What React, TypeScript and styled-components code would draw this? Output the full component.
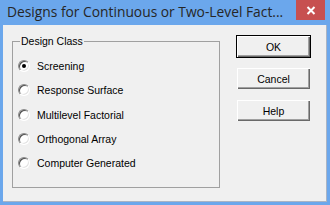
import styled, { createGlobalStyle } from "styled-components";

const GlobalStyle = createGlobalStyle`
  html, body {
    margin: 0;
    padding: 0;
    background: #6ba7ec;
  }
`;

const options = [
  "Screening",
  "Response Surface",
  "Multilevel Factorial",
  "Orthogonal Array",
  "Computer Generated",
];

const App = () => {
  return (
    <>
      <GlobalStyle />
      <Window>
        <TitleBar>
          <TitleText>Designs for Continuous or Two-Level Fact...</TitleText>
          <CloseButton>
            <svg width="10" height="9" viewBox="0 0 10 9">
              <path d="M1.5 1 L8.5 8 M8.5 1 L1.5 8" stroke="#fff" strokeWidth="2" />
            </svg>
          </CloseButton>
        </TitleBar>

        <Client>
          <GroupBox>
            <GroupLabel>Design Class</GroupLabel>
            {options.map((label, i) => (
              <RadioRow key={label}>
                <RadioCircle checked={i === 0} />
                <RadioText>{label}</RadioText>
              </RadioRow>
            ))}
          </GroupBox>

          <ButtonColumn>
            <DialogButton isDefault={true}>OK</DialogButton>
            <DialogButton>Cancel</DialogButton>
            <DialogButton>Help</DialogButton>
          </ButtonColumn>
        </Client>
      </Window>
    </>
  );
};
export default App;

const Window = styled.div`
  width: 330px;
  height: 205px;

  box-sizing: border-box;
  padding: 0 3px 3px 3px;
  background-color: #6ba7ec;

  display: flex;
  flex-direction: column;
`;

const TitleBar = styled.div`
  height: 25px;
  flex-shrink: 0;

  display: flex;
  flex-direction: row;
  align-items: flex-start;
  justify-content: space-between;
`;

const TitleText = styled.div`
  padding: 2px 0 0 4px;

  font-family: "Open Sans", "Noto Sans", sans-serif;
  font-size: 13.8px;
  line-height: 20px;
  color: #262626;
  white-space: nowrap;
`;

const CloseButton = styled.div`
  width: 29px;
  height: 20px;
  margin-right: 2px;

  background-color: #c75050;

  display: flex;
  align-items: center;
  justify-content: center;
`;

const Client = styled.div`
  flex: 1;

  box-sizing: border-box;
  padding: 10px 0 0 9px;
  background-color: #f0f0f0;
  border-right: 1px solid #aab4c4;
  border-bottom: 1px solid #aab4c4;

  display: flex;
  flex-direction: row;
  align-items: flex-start;
  gap: 16px;

  font-family: "Liberation Sans", Arial, sans-serif;
  font-size: 10.5px;
  color: #000;
`;

const GroupBox = styled.div`
  position: relative;
  width: 208px;
  height: 147px;
  margin-top: 6px;

  box-sizing: border-box;
  padding: 12px 0 0 5px;
  border: 1px solid #a0a0a0;

  display: flex;
  flex-direction: column;
`;

const GroupLabel = styled.div`
  position: absolute;
  top: -8px;
  left: 7px;

  padding: 0 1px;
  background-color: #f0f0f0;
  line-height: 14px;
`;

const RadioRow = styled.div`
  height: 24.25px;

  display: flex;
  flex-direction: row;
  align-items: center;
  gap: 7px;
`;

const RadioCircle = styled.div<{ checked?: boolean }>`
  position: relative;
  width: 12px;
  height: 12px;

  box-sizing: border-box;
  border-radius: 50%;
  border: 1px solid;
  border-color: #8a8a8a #ffffff #ffffff #8a8a8a;
  background-color: #ffffff;
  box-shadow: inset 1px 1px 0 #505050, inset -1px -1px 0 #e3e3e3;

  ${(props) =>
    props.checked &&
    `
    &::after {
      content: "";
      position: absolute;
      left: 3px;
      top: 3px;
      width: 4px;
      height: 4px;
      border-radius: 50%;
      background-color: #000;
    }
  `}
`;

const RadioText = styled.span`
  line-height: 14px;
  white-space: nowrap;
`;

const ButtonColumn = styled.div`
  display: flex;
  flex-direction: column;
  gap: 9px;
`;

const DialogButton = styled.div<{ isDefault?: boolean }>`
  width: 75px;
  height: 23px;

  box-sizing: border-box;
  background-color: #f0f0f0;
  border: 1px solid ${(props) => (props.isDefault ? "#000" : "transparent")};
  box-shadow: inset 1px 1px 0 #ffffff, inset -1px -1px 0 #696969,
    inset -2px -2px 0 #a0a0a0;

  display: flex;
  align-items: center;
  justify-content: center;

  line-height: 14px;
`;
